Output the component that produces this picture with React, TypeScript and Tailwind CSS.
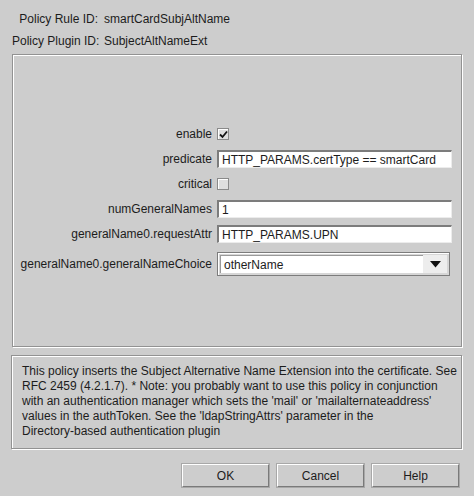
import React from 'react';

const font = { fontFamily: '"Liberation Sans", Arial, Helvetica, sans-serif' };

function TextField({ value }: { value: string }) {
  return (
    <div className="h-[18px] w-[235px] bg-white border-t-2 border-l-2 border-[#7c7c7c] border-r border-b border-r-[#ececec] border-b-[#ececec] flex items-center pl-[3px] text-[12px] leading-none whitespace-nowrap">
      {value}
    </div>
  );
}

function CheckBox({ checked }: { checked?: boolean }) {
  return (
    <div className="h-[12px] w-[12px] border border-[#8a8a8a] bg-[#dedede] shadow-[inset_1px_1px_0_#fff] flex items-center justify-center">
      {checked && (
        <svg width="9" height="9" viewBox="0 0 9 9">
          <path d="M1 4.5 L3.5 7 L8 1.5" stroke="#111" strokeWidth="1.8" fill="none" />
        </svg>
      )}
    </div>
  );
}

function Select({ value }: { value: string }) {
  return (
    <div className="h-[24px] w-[233px] border border-[#7c7c7c] bg-[#d6d6d6] shadow-[inset_1px_1px_0_#fff] p-[2px] flex">
      <div className="flex-1 bg-white border-t border-l border-[#9a9a9a] flex items-center pl-[3px] text-[12px] leading-none">
        {value}
      </div>
      <div className="w-[24px] bg-[#ededed] flex items-center justify-center">
        <svg width="11" height="7" viewBox="0 0 11 7">
          <path d="M0 0 H11 L5.5 6.5 Z" fill="#111" />
        </svg>
      </div>
    </div>
  );
}

function Button({ label }: { label: string }) {
  return (
    <div className="h-[23px] w-[87px] bg-[#cdcdcd] border-t border-l border-white border-b border-r border-b-[#7a7a7a] border-r-[#7a7a7a] shadow-[0_0_0_1px_#a8a8a8] flex items-center justify-center text-[12px] leading-none">
      {label}
    </div>
  );
}

const rows: { label: string; kind: 'check' | 'text' | 'select'; value?: string; checked?: boolean }[] = [
  { label: 'enable', kind: 'check', checked: true },
  { label: 'predicate', kind: 'text', value: 'HTTP_PARAMS.certType == smartCard' },
  { label: 'critical', kind: 'check' },
  { label: 'numGeneralNames', kind: 'text', value: '1' },
  { label: 'generalName0.requestAttr', kind: 'text', value: 'HTTP_PARAMS.UPN' },
  { label: 'generalName0.generalNameChoice', kind: 'select', value: 'otherName' },
];

export default function App() {
  return (
    <div className="w-[474px] h-[496px] bg-[#cdcdcd] text-[#1c1c1c] overflow-hidden flex flex-col" style={font}>
      {/* Header */}
      <div className="pt-[12px] pl-[12px] flex flex-col text-[12px] leading-[14px]">
        <div className="flex h-[14px]">
          <span className="w-[86px] text-right whitespace-nowrap">Policy Rule ID:</span>
          <span className="ml-[6px]">smartCardSubjAltName</span>
        </div>
        <div className="flex h-[14px] mt-[8px]">
          <span className="w-[86px] text-right whitespace-nowrap">Policy Plugin ID:</span>
          <span className="ml-[6px]">SubjectAltNameExt</span>
        </div>
      </div>

      {/* Parameters panel */}
      <div className="mt-[6px] mx-[12px] h-[293px] border border-[#929292] shadow-[inset_1px_1px_0_#fff,1px_1px_0_#fff] flex flex-col justify-center pl-[3px]">
        <div className="grid grid-cols-[196px_233px] gap-x-[5px] gap-y-[7px] items-center text-[12px] leading-none">
          {rows.map((r) => (
            <React.Fragment key={r.label}>
              <div className={`text-right whitespace-nowrap ${r.kind === 'select' ? 'mt-[2px]' : ''}`}>{r.label}</div>
              <div className={r.kind === 'select' ? 'mt-[2px]' : ''}>
                {r.kind === 'check' && (
                  <div className="h-[18px] flex items-center">
                    <CheckBox checked={r.checked} />
                  </div>
                )}
                {r.kind === 'text' && <TextField value={r.value || ''} />}
                {r.kind === 'select' && <Select value={r.value || ''} />}
              </div>
            </React.Fragment>
          ))}
        </div>
      </div>

      {/* Description */}
      <div className="mt-[8px] ml-[11px] mr-[12px] h-[94px] border border-[#929292] shadow-[inset_1px_1px_0_#fff,1px_1px_0_#fff] pl-[10px] pt-[8px] text-[12px] leading-[15px] whitespace-nowrap">
        This policy inserts the Subject Alternative Name Extension into the certificate. See
        <br />
        RFC 2459 (4.2.1.7). * Note: you probably want to use this policy in conjunction
        <br />
        with an authentication manager which sets the 'mail' or 'mailalternateaddress'
        <br />
        values in the authToken. See the 'ldapStringAttrs' parameter in the
        <br />
        Directory-based authentication plugin
      </div>

      {/* Buttons */}
      <div className="mt-[15px] pr-[15px] flex justify-end gap-[8px]">
        <Button label="OK" />
        <Button label="Cancel" />
        <Button label="Help" />
      </div>
    </div>
  );
}
